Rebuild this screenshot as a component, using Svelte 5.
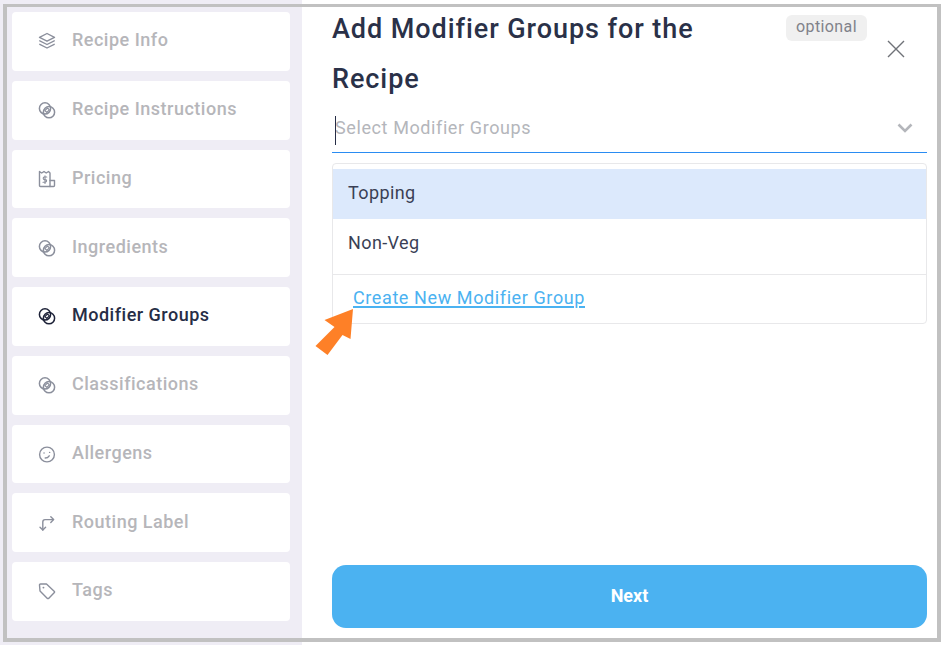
<script>
	let steps = [
		{ label: 'Recipe Info', icon: 'layers' },
		{ label: 'Recipe Instructions', icon: 'rings' },
		{ label: 'Pricing', icon: 'receipt' },
		{ label: 'Ingredients', icon: 'rings' },
		{ label: 'Modifier Groups', icon: 'rings', active: true },
		{ label: 'Classifications', icon: 'rings' },
		{ label: 'Allergens', icon: 'face' },
		{ label: 'Routing Label', icon: 'route' },
		{ label: 'Tags', icon: 'tag' }
	];

	let groups = ['Topping', 'Non-Veg'];
</script>

<div class="page">
	<aside>
		{#each steps as step}
			<div class="step" class:active={step.active}>
				<svg viewBox="0 0 18 18" width="18" height="18" fill="none" stroke="currentColor" stroke-width="1.4" stroke-linejoin="round" stroke-linecap="round">
					{#if step.icon === 'layers'}
						<path d="M9 1.5 L16.5 5.4 L9 9.2 L1.5 5.4 Z" />
						<path d="M1.8 8.8 L9 12.5 L16.2 8.8" />
						<path d="M1.8 12.3 L9 16 L16.2 12.3" />
					{:else if step.icon === 'rings'}
						<circle cx="7" cy="7.4" r="5.6" stroke-width="1.5" />
						<circle cx="11" cy="11.2" r="5.6" stroke-width="1.5" />
						<path d="M6.8 9.6 L9.5 7 L11.4 8.9 L8.8 11.4 Z" stroke-width="1.2" />
					{:else if step.icon === 'receipt'}
						<path d="M1.5 1.5 L3.7 3 L6 1.5 L8.2 3 L10.5 1.5 L12 3 V16.5 H2.5 Q1.5 16.5 1.5 15.5 Z" />
						<path d="M12 10.5 H16.5 V15.5 Q16.5 16.5 15.5 16.5 H12" />
						<path d="M8.8 7 H6.2 Q5.2 7 5.2 8.2 T6.2 9.6 H7.4 Q8.6 9.6 8.6 10.8 T7.4 12.2 H5 M7 5.8 V13.4" stroke-width="1.1" />
					{:else if step.icon === 'face'}
						<circle cx="9" cy="9.5" r="7.4" />
						<path d="M6 8 H6.1 M11.6 7.4 H11.7 M7.2 13 Q9.8 13 11.2 10.8" />
					{:else if step.icon === 'route'}
						<path d="M4.8 16 V8 Q4.8 5.6 7 5.6 H15.5" />
						<path d="M12.8 2.8 L15.6 5.6 L12.8 8.4 M2 13.2 L4.8 16 L7.6 13.2" />
					{:else}
						<path d="M1.5 3 Q1.5 2 2.5 2 H8.5 L16.4 9.4 Q16.9 10 16.4 10.6 L10.6 16.4 Q10 16.9 9.4 16.4 L2 9 Z" />
						<path d="M5.4 5.6 H5.5" stroke-width="1.8" />
					{/if}
				</svg>
				<span>{step.label}</span>
			</div>
		{/each}
	</aside>

	<main>
		<header>
			<h2>Add Modifier Groups for the Recipe</h2>
			<span class="badge">optional</span>
			<svg class="close" viewBox="0 0 18 18" width="18" height="18" fill="none" stroke="#6f7278" stroke-width="1.4">
				<path d="M1 1 L17 17 M17 1 L1 17" />
			</svg>
		</header>

		<div class="select">
			<span class="caret"></span>
			<span class="placeholder">Select Modifier Groups</span>
			<svg viewBox="0 0 16 10" width="16" height="10" fill="none" stroke="#b4b6bb" stroke-width="2.6">
				<path d="M1.5 1.5 L8 8 L14.5 1.5" />
			</svg>
		</div>

		<div class="menu">
			<ul>
				{#each groups as group, i}
					<li class:selected={i === 0}>{group}</li>
				{/each}
			</ul>
			<div class="create">
				<a href="#create">Create New Modifier Group</a>
			</div>
			<svg class="arrow" viewBox="0 0 40 48" width="40" height="48">
				<path d="M38 1 L9.5 12 L19.5 19 L0.5 38 L12.5 47 L27.5 27 L35.5 31 Z" fill="#fe8027" />
			</svg>
		</div>

		<button>Next</button>
	</main>

	<div class="frame"></div>
</div>

<style>
	:global(body) {
		background: #fff;
	}

	.page {
		display: flex;
		width: 945px;
		height: 645px;
		overflow: hidden;
		position: relative;
		font-family: Roboto, 'Liberation Sans', sans-serif;
		color: #262d46;
	}

	.frame {
		position: absolute;
		left: 3px;
		top: 4px;
		width: 938px;
		height: 638px;
		box-sizing: border-box;
		border: 4px solid #c1c1c1;
		border-top-width: 3px;
		pointer-events: none;
	}

	aside {
		width: 302px;
		box-sizing: border-box;
		flex-shrink: 0;
		padding: 12px 12px 0;
		background: #efedf5;
		display: flex;
		flex-direction: column;
		gap: 10px;
	}

	.step {
		height: 58.75px;
		display: flex;
		align-items: center;
		gap: 16px;
		padding: 0 0 3px 26px;
		background: #fff;
		border-radius: 4px;
		color: #8b8f9c;
		font-size: 18px;
		letter-spacing: 0.5px;
		box-sizing: border-box;
	}

	.step svg {
		margin-top: 3px;
		flex-shrink: 0;
	}

	.step span {
		color: #b6b6ba;
		font-weight: 500;
	}

	.step.active {
		color: #1d2238;
	}

	.step.active span {
		color: #262d46;
	}

	main {
		flex: 1;
		display: flex;
		flex-direction: column;
		padding: 4px 18px 17px 30px;
		min-width: 0;
	}

	header {
		display: flex;
		align-items: flex-start;
		height: 100px;
	}

	h2 {
		width: 454px;
		margin: 0;
		font-size: 27px;
		font-weight: 500;
		line-height: 50px;
		letter-spacing: 0.93px;
		padding-right: 60px;
		box-sizing: border-box;
		color: #2a3148;
	}

	.badge {
		margin-top: 11px;
		padding: 0 10px;
		height: 26px;
		line-height: 24px;
		width: 81px;
		box-sizing: border-box;
		text-align: center;
		border-radius: 6px;
		background: #f0f0f0;
		color: #80828a;
		font-size: 16px;
		letter-spacing: 0.4px;
	}

	.close {
		margin: 36px 0 0 20px;
	}

	.select {
		height: 48px;
		display: flex;
		align-items: center;
		border-bottom: 1px solid #2a8cf2;
		padding: 0 14px 0 3px;
		position: relative;
	}

	.caret {
		position: absolute;
		left: 3px;
		top: 12px;
		height: 29px;
		width: 1px;
		background: #262d46;
	}

	.placeholder {
		flex: 1;
		color: #b4b6bb;
		font-size: 18px;
		letter-spacing: 0.6px;
		padding-bottom: 2px;
	}

	.menu {
		position: relative;
		margin-top: 10px;
		height: 161px;
		box-sizing: border-box;
		border: 1px solid #e8e8ea;
		border-radius: 4px;
	}

	ul {
		list-style: none;
		margin: 0;
		padding: 5px 0;
		border-bottom: 1px solid #e8e8ea;
	}

	li {
		height: 50px;
		line-height: 47px;
		padding-left: 15px;
		font-size: 18px;
		letter-spacing: 0.4px;
		color: #3a3f55;
	}

	li.selected {
		background: #dce9fc;
	}

	.create {
		padding: 12px 0 0 20px;
	}

	a {
		color: #4bb2f1;
		font-size: 18px;
		letter-spacing: 0.6px;
		text-underline-offset: 2px;
		text-decoration-thickness: 1.5px;
	}

	.arrow {
		position: absolute;
		left: -18px;
		top: 144px;
	}

	button {
		margin-top: auto;
		height: 63px;
		padding: 0 0 2px;
		border: 0;
		border-radius: 14px;
		background: #4bb2f1;
		color: #fff;
		font-family: inherit;
		font-size: 18px;
		font-weight: 700;
	}
</style>
